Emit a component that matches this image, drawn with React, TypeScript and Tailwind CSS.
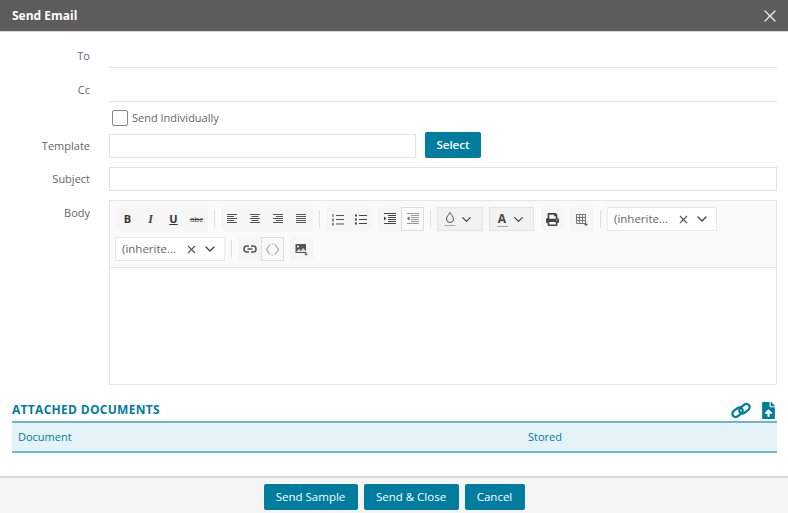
import { ReactNode } from 'react';
import { ChevronDown, X } from 'lucide-react';
import { FaFileUpload, FaPrint } from 'react-icons/fa';

const lines = (rows: number[][]) => (
  <svg width="12" height="12" viewBox="0 0 12 12" fill="#555">
    {rows.map(([x, y, w], i) => (
      <rect key={i} x={x} y={y} width={w} height="1" />
    ))}
  </svg>
);

const alignLeft = lines([[0, 1, 10], [0, 3, 7], [0, 5, 10], [0, 7, 7], [0, 9, 10]]);
const alignCenter = lines([[0, 1, 10], [1.5, 3, 7], [0, 5, 10], [1.5, 7, 7], [0, 9, 10]]);
const alignRight = lines([[0, 1, 10], [3, 3, 7], [0, 5, 10], [3, 7, 7], [0, 9, 10]]);
const justify = lines([[0, 1, 10], [0, 3, 10], [0, 5, 10], [0, 7, 10], [0, 9, 10]]);

const orderedList = (
  <svg width="13" height="13" viewBox="0 0 13 13" fill="#555">
    <rect x="1.5" y="1" width="1" height="3" />
    <rect x="1" y="5.5" width="2" height="3" opacity="0.7" />
    <rect x="1" y="10" width="2" height="2.5" opacity="0.7" />
    <rect x="5" y="2" width="8" height="1" />
    <rect x="5" y="6" width="8" height="1" />
    <rect x="5" y="10.5" width="8" height="1" />
  </svg>
);

const bulletList = (
  <svg width="13" height="13" viewBox="0 0 13 13" fill="#444">
    <rect x="1" y="1.5" width="2" height="2" />
    <rect x="1" y="5.5" width="2" height="2" />
    <rect x="1" y="9.5" width="2" height="2" />
    <rect x="5" y="2" width="8" height="1" />
    <rect x="5" y="6" width="8" height="1" />
    <rect x="5" y="10" width="8" height="1" />
  </svg>
);

const indent = (
  <svg width="13" height="12" viewBox="0 0 13 12" fill="#444">
    <rect x="1" y="0" width="12" height="1" />
    <rect x="5" y="2" width="8" height="1" />
    <rect x="5" y="4" width="8" height="1" />
    <rect x="5" y="6" width="8" height="1" />
    <rect x="5" y="8" width="8" height="1" />
    <rect x="1" y="10" width="12" height="1" />
    <path d="M1 3.5l2.5 2-2.5 2z" />
  </svg>
);

const outdent = (
  <svg width="13" height="12" viewBox="0 0 13 12" fill="#999">
    <rect x="1" y="0" width="12" height="1" />
    <rect x="5" y="2" width="8" height="1" />
    <rect x="5" y="4" width="8" height="1" />
    <rect x="5" y="6" width="8" height="1" />
    <rect x="5" y="8" width="8" height="1" />
    <rect x="1" y="10" width="12" height="1" />
    <path d="M3.5 3.5l-2.5 2 2.5 2z" fill="#555" />
  </svg>
);

const drop = (
  <svg width="12" height="16" viewBox="0 0 12 16" fill="none">
    <path d="M6 1.500C4.500 4 2.500 5.800 2.500 8a3.500 3.500 0 0 0 7 0C9.500 5.800 7.500 4 6 1.500z" stroke="#555" strokeWidth="1" />
    <rect x="0.5" y="14" width="11" height="1" fill="#aaa" />
  </svg>
);

const fontColor = (
  <span className="flex flex-col items-center w-[12px]">
    <span className="text-[12px] leading-[13px] font-bold text-[#444]">A</span>
    <span className="mt-[1px] w-[11px] h-[1px] bg-[#aaa]" />
  </span>
);

const tableIcon = (
  <svg width="13" height="13" viewBox="0 0 13 13" fill="none" stroke="#777" strokeWidth="1">
    <path d="M1.500 1.500h9v9h-9zM1.500 4.500h9M1.500 7.500h9M4.500 1.500v9M7.500 1.500v9" />
    <path d="M11 10v3M9.500 11.500h3" stroke="#555" />
  </svg>
);

const linkIcon = (
  <svg width="14" height="10" viewBox="0 0 14 10" fill="none" stroke="#555" strokeWidth="1.600">
    <path d="M6 2H4a3 3 0 0 0 0 6h2M8 2h2a3 3 0 0 1 0 6H8M4.500 5h5" />
  </svg>
);

const unlink = (
  <svg width="15" height="13" viewBox="0 0 15 13" fill="none" stroke="#aaa" strokeWidth="1.300">
    <path d="M5 1.500L1.500 6.500 5 11.500M10 1.500l3.500 5-3.500 5" />
    <path d="M6.500 1h2M6.500 12h2" stroke="#ccc" />
  </svg>
);

const imageIcon = (
  <svg width="13" height="13" viewBox="0 0 13 13">
    <rect x="0.5" y="1" width="10.500" height="9" fill="#555" />
    <circle cx="3" cy="3.500" r="1" fill="#fff" />
    <path d="M1 9l3-3 2 2 2-3 3 3v1z" fill="#ddd" />
    <path d="M11 9.500v3M9.500 11h3" stroke="#555" />
  </svg>
);

const chainIcon = (
  <svg width="20" height="17" viewBox="0 0 20 17" fill="none" stroke="#007c9e" strokeWidth="2.200">
    <rect x="0.800" y="7" width="11.500" height="6.500" rx="3.250" transform="rotate(-38 6.550 10.250)" />
    <rect x="7.700" y="3.500" width="11.500" height="6.500" rx="3.250" transform="rotate(-38 13.450 6.750)" />
  </svg>
);

function ToolButton({ children, active }: { children: ReactNode; active?: boolean }) {
  return (
    <div
      className={`w-[23px] h-[24px] flex items-center justify-center ${
        active ? 'border border-[#dcdcdc] bg-[#fafafa]' : 'bg-[#f6f6f6]'
      }`}
    >
      {children}
    </div>
  );
}

function Sep() {
  return <div className="w-px h-[18px] bg-[#e0e0e0] mx-[6px]" />;
}

function ColorPicker({ icon, width }: { icon: ReactNode; width: string }) {
  return (
    <div className={`${width} h-[24px] flex items-center pl-[6px] gap-[3px] bg-[#f2f2f2] border border-[#e4e4e4]`}>
      {icon}
      <ChevronDown size={15} strokeWidth={2} className="text-[#444]" />
    </div>
  );
}

function FontSelect() {
  return (
    <div className="w-[110px] h-[24px] flex items-center bg-white border border-[#eaeaea] pl-[6px] text-[11.5px] text-[#666]">
      <span className="flex-1">(inherite...</span>
      <X size={13} className="text-[#555] mr-[2px]" />
      <ChevronDown size={16} strokeWidth={2} className="text-[#444] ml-[2px] mr-[6px]" />
    </div>
  );
}

function Label({ children }: { children: ReactNode }) {
  return <div className="w-[90px] shrink-0 text-right text-[11px] text-[#666]">{children}</div>;
}

export default function App() {
  return (
    <div className="w-[788px] h-[513px] flex flex-col bg-white overflow-hidden font-['Open_Sans',sans-serif]">
      <div className="h-[32px] shrink-0 flex items-center justify-between pl-[12px] pr-[8px] bg-[#5c5c5c] border-b border-[#d8d8d8]">
        <span className="text-[12px] font-bold text-white">Send Email</span>
        <X size={20} strokeWidth={1.500} className="text-[#eeeeee]" />
      </div>

      <div className="flex-1 flex flex-col pr-[11px]">
        <div className="flex gap-[19px] h-[28px] mt-[8px]">
          <div className="pt-[8px]">
            <Label>To</Label>
          </div>
          <div className="flex-1 border-b border-[#dfe3e6]" />
        </div>
        <div className="flex gap-[19px] h-[34px]">
          <div className="pt-[14px]">
            <Label>Cc</Label>
          </div>
          <div className="flex-1 border-b border-[#dfe3e6]" />
        </div>
        <div className="flex items-center gap-[4px] ml-[112px] mt-[8px] h-[16px]">
          <div className="w-[16px] h-[16px] rounded-[2px] border border-[#888] bg-white" />
          <span className="text-[11px] text-[#666]">Send Individually</span>
        </div>
        <div className="flex items-center gap-[19px] h-[26px] mt-[6px]">
          <div className="pt-[2px]">
            <Label>Template</Label>
          </div>
          <div className="w-[307px] h-[24px] mt-[2px] border border-[#dfe3e6]" />
          <button className="w-[56px] h-[26px] -ml-[10px] rounded-[2px] bg-[#007c9e] text-[11.5px] font-semibold text-white">
            Select
          </button>
        </div>
        <div className="flex items-center gap-[19px] h-[24px] mt-[9px]">
          <Label>Subject</Label>
          <div className="flex-1 h-[24px] border border-[#dfe3e6]" />
        </div>
        <div className="flex gap-[19px] mt-[9px]">
          <div className="pt-[5px]">
            <Label>Body</Label>
          </div>
          <div className="flex-1 h-[185px] flex flex-col border border-[#e6e6e6]">
            <div className="h-[67px] shrink-0 bg-[#fafafa] border-b border-[#e6e6e6] pl-[5px] pt-[6px] flex flex-col gap-[6px]">
              <div className="flex items-center h-[24px] ml-[1px]">
                <ToolButton><span className="text-[11px] font-bold text-[#333]">B</span></ToolButton>
                <ToolButton><span className="text-[12px] italic font-bold text-[#444] font-['Liberation_Serif',serif]">I</span></ToolButton>
                <ToolButton><span className="text-[11px] font-bold underline text-[#333]">U</span></ToolButton>
                <ToolButton><span className="text-[8px] line-through text-[#444]">abc</span></ToolButton>
                <Sep />
                <ToolButton>{alignLeft}</ToolButton>
                <ToolButton>{alignCenter}</ToolButton>
                <ToolButton>{alignRight}</ToolButton>
                <ToolButton>{justify}</ToolButton>
                <Sep />
                <ToolButton>{orderedList}</ToolButton>
                <ToolButton>{bulletList}</ToolButton>
                <div className="w-[6px]" />
                <ToolButton>{indent}</ToolButton>
                <ToolButton active>{outdent}</ToolButton>
                <Sep />
                <ColorPicker icon={drop} width="w-[46px]" />
                <div className="w-[6px]" />
                <ColorPicker icon={fontColor} width="w-[45px]" />
                <div className="w-[7px]" />
                <ToolButton><FaPrint size={13} className="text-[#444]" /></ToolButton>
                <div className="w-[6px]" />
                <ToolButton>{tableIcon}</ToolButton>
                <div className="w-[1px]" />
                <Sep />
                <FontSelect />
              </div>
              <div className="flex items-center h-[24px]">
                <FontSelect />
                <Sep />
                <ToolButton>{linkIcon}</ToolButton>
                <ToolButton active>{unlink}</ToolButton>
                <div className="w-[6px]" />
                <ToolButton>{imageIcon}</ToolButton>
              </div>
            </div>
            <div className="flex-1 bg-white" />
          </div>
        </div>

        <div className="ml-[12px] mt-[14px] flex items-center justify-between h-[22px]">
          <span className="text-[12px] font-bold text-[#007c9e] tracking-[0.3px]">ATTACHED DOCUMENTS</span>
          <div className="flex items-center gap-[9px]">
            {chainIcon}
            <FaFileUpload size={17} className="text-[#007c9e]" />
          </div>
        </div>
        <div className="ml-[12px] h-[32px] flex items-center bg-[#e3f3f8] border-y-2 border-y-[#6fb6c9] text-[11px] text-[#007c9e]">
          <span className="w-[516px] pl-[6px]">Document</span>
          <span>Stored</span>
        </div>
      </div>

      <div className="h-[37px] shrink-0 flex items-center justify-center gap-[6px] pt-[3px] bg-[#f5f5f5] border-t-2 border-[#d8d8d8]">
        <button className="w-[94px] h-[26px] rounded-[2px] bg-[#007c9e] text-[11.5px] font-medium text-white">Send Sample</button>
        <button className="w-[95px] h-[26px] rounded-[2px] bg-[#007c9e] text-[11.5px] font-medium text-white">Send &amp; Close</button>
        <button className="w-[60px] h-[26px] rounded-[2px] bg-[#007c9e] text-[11.5px] font-medium text-white">Cancel</button>
      </div>
    </div>
  );
}
